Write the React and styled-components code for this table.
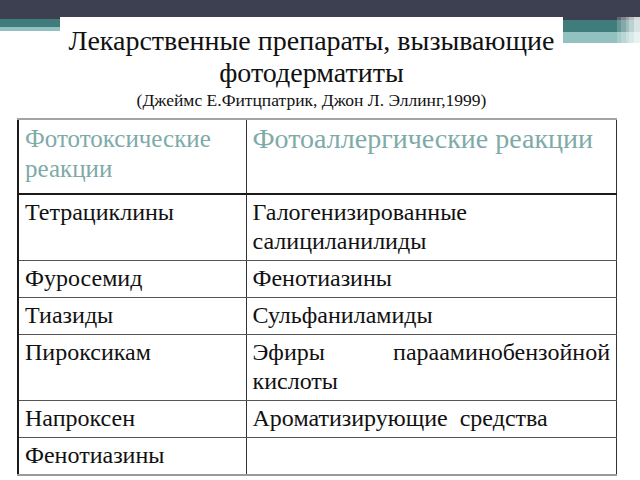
import React from "react";
import styled, { createGlobalStyle } from "styled-components";

const Global = createGlobalStyle`
  html, body {
    margin: 0;
    padding: 0;
    background: #ffffff;
  }
  body {
    font-family: "Liberation Serif", "Times New Roman", serif;
    color: #111;
  }
`;

const Page = styled.div`
  width: 640px;
  height: 480px;
  overflow: hidden;
  background: #fff;
`;

const DarkBar = styled.div`
  height: 17px;
  background: #3d4051;
`;

const HeaderRow = styled.div`
  display: flex;
  align-items: flex-start;
`;

const LeftStripe = styled.div`
  width: 60px;
  height: 14px;
  background: linear-gradient(
    to bottom,
    #3d4051 0 2px,
    #3f7c7b 2px 10px,
    #93c1bf 10px 14px
  );
`;

const RightStripe = styled.div`
  width: 77px;
  height: 26px;
  background: linear-gradient(
      to right,
      transparent 0 54px,
      rgba(255, 255, 255, 0.2) 54px 58px,
      rgba(255, 255, 255, 0.35) 58px 63px,
      rgba(255, 255, 255, 0.5) 63px 66px,
      rgba(255, 255, 255, 0.65) 66px 71px,
      rgba(255, 255, 255, 0.8) 71px 77px
    ),
    linear-gradient(
      to bottom,
      #3d4051 0 3px,
      #3f7c7b 3px 15px,
      #93c1bf 15px 26px
    );
`;

const TitleBox = styled.div`
  flex: 1;
  text-align: center;
  padding-top: 8px;
  white-space: nowrap;
`;

const Title = styled.h1`
  margin: 0;
  font-weight: normal;
  font-size: 28px;
  line-height: 32px;
`;

const Subtitle = styled.div`
  font-size: 17.5px;
  line-height: 20px;
  margin-top: 1px;
`;

const TableWrap = styled.div`
  padding: 8px 0 0 17px;
`;

const Table = styled.table`
  width: 600px;
  border-collapse: collapse;
  table-layout: fixed;
  border-top: 2px solid #a3a3a3;
  border-bottom: 2px solid #9a9a9a;
  border-left: 2px solid #1a1a1a;
  border-right: 1px solid #1a1a1a;
`;

const HeadCell = styled.th`
  font-weight: normal;
  text-align: left;
  vertical-align: top;
  color: #7eaaa8;
  font-size: ${(p) => p.$size}px;
  line-height: 30px;
  padding: ${(p) => p.$pad};
  height: 75px;
  box-sizing: border-box;
  border-bottom: 2px solid #1a1a1a;
  border-right: 1px solid #333;
`;

const Cell = styled.td`
  vertical-align: top;
  font-size: 24px;
  line-height: 29px;
  padding: 3px 6px 4px 6px;
  border-bottom: 1px solid #555;
  border-right: 1px solid #333;
  text-align: ${(p) => (p.$justify ? "justify" : "left")};
  text-align-last: left;
`;

const rows = [
  ["Тетрациклины", "Галогенизированные салициланилиды"],
  ["Фуросемид", "Фенотиазины"],
  ["Тиазиды", "Сульфаниламиды"],
  ["Пироксикам", "Эфиры парааминобензойной кислоты", true],
  ["Напроксен", "Ароматизирующие\u00a0 средства"],
  ["Фенотиазины", ""],
];

export default function App() {
  return (
    <Page>
      <Global />
      <DarkBar />
      <HeaderRow>
        <LeftStripe />
        <TitleBox>
          <Title>
            Лекарственные препараты, вызывающие
            <br />
            фотодерматиты
          </Title>
          <Subtitle>(Джеймс Е.Фитцпатрик, Джон Л. Эллинг,1999)</Subtitle>
        </TitleBox>
        <RightStripe />
      </HeaderRow>
      <TableWrap>
        <Table>
          <colgroup>
            <col style={{ width: 228 }} />
            <col />
          </colgroup>
          <thead>
            <tr>
              <HeadCell $size={25} $pad="4px 6px">
                Фототоксические реакции
              </HeadCell>
              <HeadCell $size={28} $pad="4px 6px">
                Фотоаллергические реакции
              </HeadCell>
            </tr>
          </thead>
          <tbody>
            {rows.map(([a, b, j]) => (
              <tr key={a}>
                <Cell>{a}</Cell>
                <Cell $justify={j}>{b}</Cell>
              </tr>
            ))}
          </tbody>
        </Table>
      </TableWrap>
    </Page>
  );
}
